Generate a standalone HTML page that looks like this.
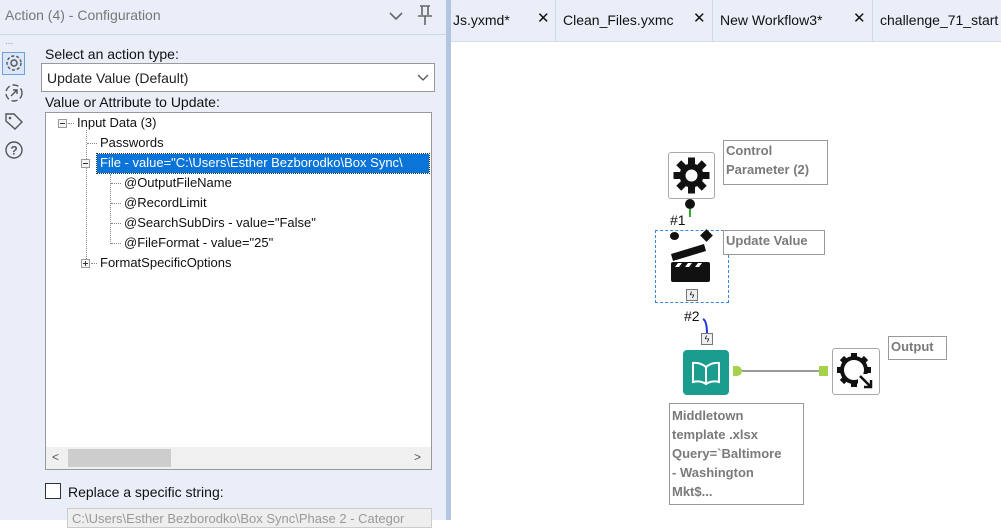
<!DOCTYPE html>
<html><head><style>
*{margin:0;padding:0;box-sizing:border-box}
body{width:1001px;height:520px;overflow:hidden;position:relative;background:#fff;font-family:"Liberation Sans",sans-serif;font-size:13px;color:#111}
.a{position:absolute}
.t{position:absolute;white-space:nowrap;line-height:16px}
.lbl{position:absolute;border:1px solid #999;background:#fff;color:#7a7a7a;font-weight:bold;font-size:13px;line-height:19px;padding:0 2px}
.tool{position:absolute;border:1px solid #aaa;border-radius:3px;background:#fff}
.dot{position:absolute;border-left:1px dotted #888}
.hd{position:absolute;border-top:1px dotted #888}
</style></head><body>
<div class="a" style="left:0;top:0;width:446px;height:520px;background:#e9eef8"></div>
<div class="a" style="left:0;top:34px;width:446px;height:1px;background:#d0d6e2"></div>
<div class="t" style="left:5px;top:7px;font-size:14px;color:#777">Action (4) - Configuration</div>
<svg class="a" style="left:388px;top:9px" width="16" height="14"><path d="M2 4 L8 10 L14 4" stroke="#666" stroke-width="1.6" fill="none"/></svg>
<svg class="a" style="left:416px;top:4px" width="18" height="22"><path d="M4 2 H14 M6 2 V11 M12 2 V11 M2 12 H16 M9 12 V21" stroke="#666" stroke-width="1.6" fill="none"/></svg>
<div class="t" style="left:5px;top:34px;color:#999;font-size:10px">...</div>
<div class="a" style="left:2px;top:52px;width:23px;height:23px;border:1px solid #6ea0dd;background:#dbe6f6"></div>
<svg class="a" style="left:4px;top:53px" width="20" height="20"><circle cx="10" cy="10" r="3" stroke="#555" fill="none" stroke-width="1.4"/><circle cx="10" cy="10" r="7" stroke="#555" fill="none" stroke-width="1.4" stroke-dasharray="3 2"/></svg>
<svg class="a" style="left:4px;top:83px" width="20" height="20"><circle cx="10" cy="10" r="8" stroke="#555" fill="none" stroke-width="1.4" stroke-dasharray="6 3"/><path d="M7 13 L13 7 M9 7 H13 V11" stroke="#555" stroke-width="1.4" fill="none"/></svg>
<svg class="a" style="left:4px;top:111px" width="20" height="20"><path d="M2 3 H10 L18 11 L11 18 L2 10 Z" stroke="#555" fill="none" stroke-width="1.4"/><circle cx="6" cy="7" r="1.3" fill="#555"/></svg>
<svg class="a" style="left:4px;top:140px" width="20" height="20"><circle cx="10" cy="10" r="8" stroke="#555" fill="none" stroke-width="1.4"/><text x="10" y="14.5" font-size="12" text-anchor="middle" fill="#555" font-family="Liberation Sans" font-weight="bold">?</text></svg>
<div class="t" style="left:45px;top:46px;font-size:14px">Select an action type:</div>
<div class="a" style="left:41px;top:63px;width:394px;height:29px;background:#fff;border:1px solid #999"></div>
<div class="t" style="left:47px;top:70px;font-size:14px;color:#222">Update Value (Default)</div>
<svg class="a" style="left:417px;top:73px" width="12" height="10"><path d="M1 2 L6 7 L11 2" stroke="#555" stroke-width="1.3" fill="none"/></svg>
<div class="t" style="left:45px;top:94px;font-size:14px">Value or Attribute to Update:</div>
<div class="a" style="left:45px;top:112px;width:387px;height:358px;background:#fff;border:1px solid #999"></div>
<div class="a" style="left:58px;top:119px;width:9px;height:9px;border:1px solid #999;background:#f4f4f4"></div><div class="a" style="left:60px;top:123px;width:5px;height:1px;background:#333"></div>
<div class="hd" style="left:68px;top:123px;width:6px"></div>
<div class="t" style="left:77px;top:115px">Input Data (3)</div>
<div class="dot" style="left:86px;top:130px;height:135px"></div>
<div class="hd" style="left:87px;top:143px;width:10px"></div>
<div class="t" style="left:100px;top:135px">Passwords</div>
<div class="a" style="left:81px;top:159px;width:9px;height:9px;border:1px solid #999;background:#f4f4f4"></div><div class="a" style="left:83px;top:163px;width:5px;height:1px;background:#333"></div>
<div class="a" style="left:97px;top:154px;width:332px;height:19px;background:#0a74d8;outline:1px dotted #333"></div>
<div class="t" style="left:100px;top:155px;color:#fff">File - value="C:\Users\Esther Bezborodko\Box Sync\</div>
<div class="dot" style="left:110px;top:174px;height:70px"></div>
<div class="hd" style="left:111px;top:183px;width:10px"></div><div class="t" style="left:124px;top:175px">@OutputFileName</div>
<div class="hd" style="left:111px;top:203px;width:10px"></div><div class="t" style="left:124px;top:195px">@RecordLimit</div>
<div class="hd" style="left:111px;top:223px;width:10px"></div><div class="t" style="left:124px;top:215px">@SearchSubDirs - value="False"</div>
<div class="hd" style="left:111px;top:243px;width:10px"></div><div class="t" style="left:124px;top:235px">@FileFormat - value="25"</div>
<div class="a" style="left:81px;top:259px;width:9px;height:9px;border:1px solid #999;background:#f4f4f4"></div><div class="a" style="left:83px;top:263px;width:5px;height:1px;background:#333"></div><div class="a" style="left:85px;top:261px;width:1px;height:5px;background:#333"></div>
<div class="hd" style="left:91px;top:263px;width:6px"></div>
<div class="t" style="left:100px;top:255px">FormatSpecificOptions</div>
<div class="a" style="left:46px;top:447px;width:385px;height:22px;background:#f0f0f0"></div>
<div class="a" style="left:68px;top:449px;width:103px;height:18px;background:#cdcdcd"></div>
<div class="t" style="left:52px;top:449px;color:#555;font-size:12px">&lt;</div>
<div class="t" style="left:414px;top:449px;color:#555;font-size:12px">&gt;</div>
<div class="a" style="left:45px;top:483px;width:16px;height:16px;border:1px solid #333;background:#fff"></div>
<div class="t" style="left:68px;top:484px;font-size:14px">Replace a specific string:</div>
<div class="a" style="left:67px;top:508px;width:365px;height:20px;border:1px solid #ccc;background:#eee"></div>
<div class="t" style="left:72px;top:511px;color:#999">C:\Users\Esther Bezborodko\Box Sync\Phase 2 - Categor</div>
<div class="a" style="left:446px;top:0;width:5px;height:520px;background:#b4c5e2"></div>
<div class="a" style="left:451px;top:0;width:550px;height:42px;background:#e9eef8;border-bottom:1px solid #d4dbe8"></div>
<div class="a" style="left:555px;top:0;width:1px;height:42px;background:#d0d8e6"></div>
<div class="a" style="left:712px;top:0;width:1px;height:42px;background:#d0d8e6"></div>
<div class="a" style="left:872px;top:0;width:1px;height:42px;background:#d0d8e6"></div>
<div class="t" style="left:453px;top:12px;font-size:14px">Js.yxmd*</div>
<div class="t" style="left:537px;top:11px;font-size:15px">✕</div>
<div class="t" style="left:563px;top:12px;font-size:14px">Clean_Files.yxmc</div>
<div class="t" style="left:693px;top:11px;font-size:15px">✕</div>
<div class="t" style="left:720px;top:12px;font-size:14px">New Workflow3*</div>
<div class="t" style="left:853px;top:11px;font-size:15px">✕</div>
<div class="t" style="left:880px;top:12px;font-size:14px">challenge_71_start</div>
<!-- canvas -->
<div class="tool" style="left:668px;top:152px;width:47px;height:47px"></div>
<svg class="a" style="left:671px;top:155px" width="41" height="41"><g transform="translate(20.5,20.5)"><circle r="12" fill="#111"/><g fill="#111"><rect x="-3.5" y="-18" width="7" height="8"/><rect x="-3.5" y="-18" width="7" height="8" transform="rotate(45)"/><rect x="-3.5" y="-18" width="7" height="8" transform="rotate(90)"/><rect x="-3.5" y="-18" width="7" height="8" transform="rotate(135)"/><rect x="-3.5" y="-18" width="7" height="8" transform="rotate(180)"/><rect x="-3.5" y="-18" width="7" height="8" transform="rotate(225)"/><rect x="-3.5" y="-18" width="7" height="8" transform="rotate(270)"/><rect x="-3.5" y="-18" width="7" height="8" transform="rotate(315)"/></g><circle r="6" fill="#fff"/></g></svg>
<div class="lbl" style="left:723px;top:140px;width:105px;height:45px">Control<br>Parameter (2)</div>
<div class="a" style="left:685px;top:199px;width:10px;height:10px;border-radius:50%;background:#111"></div>
<div class="a" style="left:689px;top:209px;width:2px;height:8px;background:#3a3"></div>
<div class="t" style="left:670px;top:212px;font-size:14px">#1</div>
<div class="a" style="left:655px;top:230px;width:74px;height:73px;border:1px dashed #3a87d6"></div>
<div class="a" style="left:670px;top:232px;width:9px;height:8px;border-radius:50%;background:#111"></div>
<div class="a" style="left:702px;top:231px;width:9px;height:9px;background:#111;transform:rotate(45deg)"></div>
<svg class="a" style="left:668px;top:236px" width="46" height="48"><path d="M3 18 L36 8 L38 15 L5 25 Z" fill="#111"/><rect x="3" y="26" width="39" height="20" rx="2" fill="#111"/><path d="M10 27 L14 27 L11 31 L7 31Z M20 27 L24 27 L21 31 L17 31Z M30 27 L34 27 L31 31 L27 31Z" fill="#fff"/></svg>
<div class="lbl" style="left:723px;top:230px;width:102px;height:25px">Update Value</div>
<div class="a" style="left:686px;top:289px;width:12px;height:12px;border:1px solid #777;background:#eee;font-size:9px;text-align:center;line-height:10px">ϟ</div>
<div class="t" style="left:684px;top:308px;font-size:14px">#2</div>
<svg class="a" style="left:700px;top:318px" width="12" height="18"><path d="M3 1 Q7 3 7 16" stroke="#2233dd" stroke-width="2" fill="none"/></svg>
<div class="a" style="left:701px;top:333px;width:12px;height:12px;border:1px solid #777;background:#eee;font-size:9px;text-align:center;line-height:10px">ϟ</div>
<div class="a" style="left:683px;top:350px;width:46px;height:45px;border-radius:4px;background:#1a9c8e"></div>
<svg class="a" style="left:683px;top:350px" width="46" height="45"><path d="M10 13 Q17 12 23 17 Q29 12 36 13 V32 Q29 30 23 34 Q17 30 10 32 Z M23 17 V34" stroke="#fff" stroke-width="2" fill="none"/></svg>
<div class="a" style="left:733px;top:366px;width:9px;height:10px;border-radius:0 5px 5px 0;background:#a6d14a"></div>
<div class="a" style="left:742px;top:370px;width:78px;height:2px;background:#999"></div>
<div class="a" style="left:819px;top:366px;width:9px;height:10px;background:#a6d14a"></div>
<div class="tool" style="left:832px;top:348px;width:48px;height:47px"></div>
<svg class="a" style="left:835px;top:351px" width="42" height="42"><g transform="translate(19,19)"><circle r="12" fill="none" stroke="#111" stroke-width="4"/><g fill="#111"><rect x="-3" y="-17" width="6" height="6"/><rect x="-3" y="-17" width="6" height="6" transform="rotate(45)"/><rect x="-3" y="-17" width="6" height="6" transform="rotate(90)"/><rect x="-3" y="-17" width="6" height="6" transform="rotate(180)"/><rect x="-3" y="-17" width="6" height="6" transform="rotate(225)"/><rect x="-3" y="-17" width="6" height="6" transform="rotate(270)"/><rect x="-3" y="-17" width="6" height="6" transform="rotate(315)"/></g><rect x="4" y="4" width="16" height="16" fill="#fff"/><path d="M6 6 L17 17 M10 17 H17 V10" stroke="#111" stroke-width="2.5" fill="none"/></g></svg>
<div class="lbl" style="left:888px;top:336px;width:59px;height:24px">Output</div>
<div class="lbl" style="left:669px;top:403px;width:135px;height:102px;padding-top:2px">Middletown<br>template .xlsx<br>Query=`Baltimore<br>- Washington<br>Mkt$...</div>
</body></html>
